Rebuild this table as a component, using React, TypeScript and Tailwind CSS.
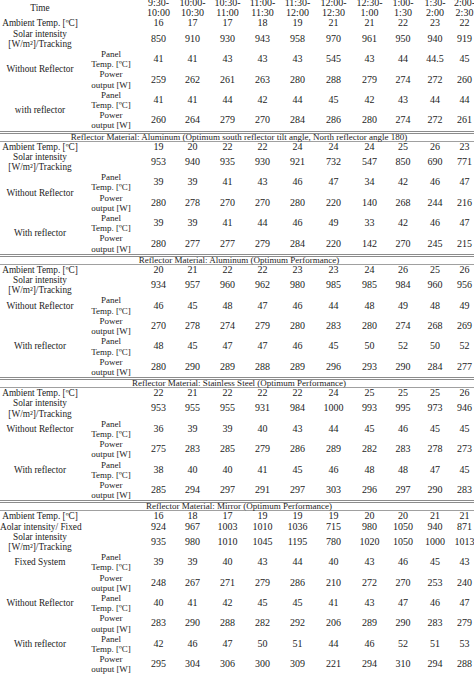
import React from 'react';

type Group = { name: string; panel: string[]; power: string[] };
type Section = {
    title?: string;
    spanLabels: boolean;
    ambient: string[];
    fixed?: string[];
    solar: string[];
    groups: Group[];
};

const times = [
    ['9:30-', '10:00'], ['10:00-', '10:30'], ['10:30-', '11:00'], ['11:00-', '11:30'], ['11:30-', '12:00'],
    ['12:00-', '12:30'], ['12:30-', '1:00'], ['1:00-', '1:30'], ['1:30-', '2:00'], ['2:00-', '2:30'],
];

const s = (str: string) => str.split(' ');

const sections: Section[] = [
    {
        spanLabels: true,
        ambient: s('16 17 17 18 19 21 21 22 23 22'),
        solar: s('850 910 930 943 958 970 961 950 940 919'),
        groups: [
            { name: 'Without Reflector', panel: s('41 41 43 43 43 545 43 44 44.5 45'), power: s('259 262 261 263 280 288 279 274 272 260') },
            { name: 'with reflector', panel: s('41 41 44 42 44 45 42 43 44 44'), power: s('260 264 279 270 284 286 280 274 272 261') },
        ],
    },
    {
        title: 'Reflector Material: Aluminum (Optimum south reflector tilt angle, North reflector angle 180)',
        spanLabels: true,
        ambient: s('19 20 22 22 24 24 24 25 26 23'),
        solar: s('953 940 935 930 921 732 547 850 690 771'),
        groups: [
            { name: 'Without Reflector', panel: s('39 39 41 43 46 47 34 42 46 47'), power: s('280 278 270 270 280 220 140 268 244 216') },
            { name: 'With reflector', panel: s('39 39 41 44 46 49 33 42 46 47'), power: s('280 277 277 279 284 220 142 270 245 215') },
        ],
    },
    {
        title: 'Reflector Material: Aluminum (Optimum Performance)',
        spanLabels: false,
        ambient: s('20 21 22 22 23 23 24 26 25 26'),
        solar: s('934 957 960 962 980 985 985 984 960 956'),
        groups: [
            { name: 'Without Reflector', panel: s('46 45 48 47 46 44 48 49 48 49'), power: s('270 278 274 279 280 283 280 274 268 269') },
            { name: 'With reflector', panel: s('48 45 47 47 46 45 50 52 50 52'), power: s('280 290 289 288 289 296 293 290 284 277') },
        ],
    },
    {
        title: 'Reflector Material: Stainless Steel (Optimum Performance)',
        spanLabels: false,
        ambient: s('22 21 22 22 22 24 25 25 25 26'),
        solar: s('953 955 955 931 984 1000 993 995 973 946'),
        groups: [
            { name: 'Without Reflector', panel: s('36 39 39 40 43 44 45 46 45 45'), power: s('275 283 285 279 286 289 282 283 278 273') },
            { name: 'With reflector', panel: s('38 40 40 41 45 46 48 48 47 45'), power: s('285 294 297 291 297 303 296 297 290 283') },
        ],
    },
    {
        title: 'Reflector Material: Mirror (Optimum Performance)',
        spanLabels: false,
        ambient: s('16 18 17 19 19 19 20 20 21 21'),
        fixed: s('924 967 1003 1010 1036 715 980 1050 940 871'),
        solar: s('935 980 1010 1045 1195 780 1020 1050 1000 1013'),
        groups: [
            { name: 'Fixed System', panel: s('39 39 40 43 44 40 43 46 45 43'), power: s('248 267 271 279 286 210 272 270 253 240') },
            { name: 'Without Reflector', panel: s('40 41 42 45 45 41 43 47 46 47'), power: s('283 290 288 282 292 206 289 290 283 279') },
            { name: 'With reflector', panel: s('42 46 47 50 51 44 46 52 51 53'), power: s('295 304 306 300 309 221 294 310 294 288') },
        ],
    },
];

const label = 'p-0 text-center align-middle text-[9.3px]';
const sub = 'p-0 text-center align-middle text-[9px]';

const Vals: React.FC<{ values: string[] }> = ({ values }) => (
    <>
        {values.map((v, i) => (
            <td key={i} className="p-0 text-center align-middle">{v}</td>
        ))}
    </>
);

const App: React.FC = () => {
    return (
        <div className="w-[474px] h-[674px] overflow-hidden bg-white">
            <table className="-mt-[2px] w-[478px] table-fixed border-collapse font-['Liberation_Serif',serif] text-[10px] leading-[10.2px] text-[#1c1c1c] whitespace-nowrap">
                <colgroup>
                    <col className="w-[80px]" />
                    <col className="w-[62px]" />
                    <col className="w-[33px]" />
                    <col className="w-[35px]" />
                    <col className="w-[35px]" />
                    <col className="w-[35px]" />
                    <col className="w-[35px]" />
                    <col className="w-[37px]" />
                    <col className="w-[35px]" />
                    <col className="w-[32px]" />
                    <col className="w-[32px]" />
                    <col className="w-[27px]" />
                </colgroup>
                <thead>
                    <tr>
                        <th className={`${label} font-normal`}>Time</th>
                        <th className="p-0" />
                        {times.map(([a, b], i) => (
                            <th key={i} className="p-0 font-normal text-center">{a}<br />{b}</th>
                        ))}
                    </tr>
                </thead>
                {sections.map((sec, si) => (
                    <tbody key={si}>
                        {sec.title && (
                            <tr>
                                <td colSpan={12} className="p-0 h-[7px] text-center text-[9px] leading-[7px] border-t-[3px] border-double border-t-[#8c8c8c] border-b border-b-[#a0a0a0]">
                                    {sec.title}
                                </td>
                            </tr>
                        )}
                        <tr>
                            <td className={label}>Ambient Temp. [ºC]</td>
                            <td className="p-0" />
                            <Vals values={sec.ambient} />
                        </tr>
                        {sec.fixed && (
                            <tr>
                                <td className={label}>Aolar intensity/ Fixed</td>
                                <td className="p-0" />
                                <Vals values={sec.fixed} />
                            </tr>
                        )}
                        <tr>
                            <td className={label}>Solar intensity<br />[W/m²]/Tracking</td>
                            <td className="p-0" />
                            <Vals values={sec.solar} />
                        </tr>
                        {sec.groups.map((g, gi) => (
                            <React.Fragment key={gi}>
                                <tr>
                                    {sec.spanLabels ? (
                                        <td rowSpan={2} className={label}>{g.name}</td>
                                    ) : (
                                        <td className={label}>{g.name}</td>
                                    )}
                                    <td className={sub}>Panel<br />Temp. [ºC]</td>
                                    <Vals values={g.panel} />
                                </tr>
                                <tr>
                                    {!sec.spanLabels && <td className="p-0" />}
                                    <td className={sub}>Power<br />output [W]</td>
                                    <Vals values={g.power} />
                                </tr>
                            </React.Fragment>
                        ))}
                    </tbody>
                ))}
            </table>
        </div>
    );
};

export default App;
